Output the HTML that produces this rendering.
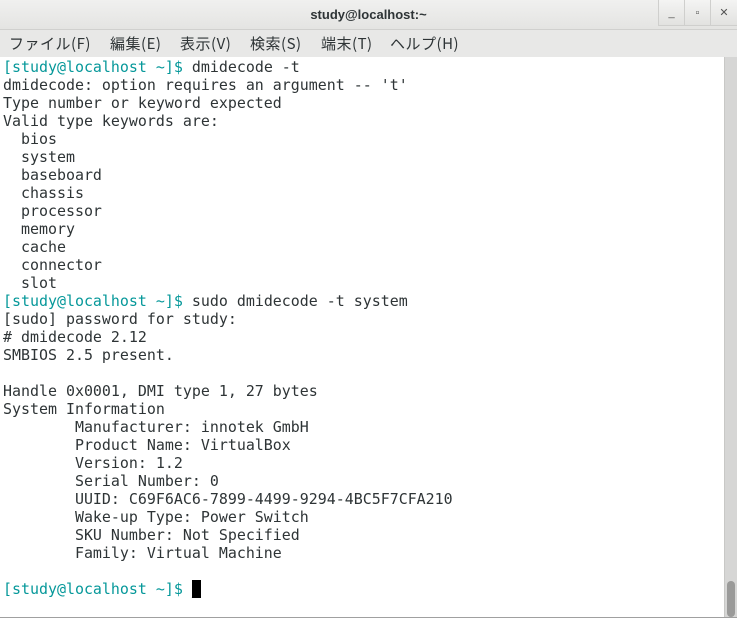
<!DOCTYPE html>
<html><head><meta charset="utf-8"><style>
body{margin:0;width:737px;height:618px;overflow:hidden;background:#e8e8e7;font-family:"Liberation Sans","Noto Sans CJK JP",sans-serif;position:relative}
#title{position:absolute;left:0;top:0;width:737px;height:30px;background:linear-gradient(#f0f0ef,#e4e4e2);border-bottom:1px solid #d0d0ce;box-sizing:border-box}
#title .t{position:absolute;left:0;right:0;top:7px;text-align:center;font-weight:bold;font-size:13px;color:#2e3436}
.btn{position:absolute;top:0;width:26px;height:26px;border-left:1px solid #cfcfcd;border-bottom:1px solid #cfcfcd;background:linear-gradient(#f4f4f3,#e2e2e0);font-size:11px;color:#555;text-align:center;line-height:26px;box-sizing:border-box}
#menu{position:absolute;top:30px;left:0;width:737px;height:27px;font-size:15px;color:#2e3436;font-family:"Noto Sans CJK JP",sans-serif}
#menu span{position:absolute;top:3px;letter-spacing:0.5px}
#term{position:absolute;top:57px;left:0;width:724px;height:560px;background:#fff}
pre{margin:0;position:absolute;left:3px;top:1px;font-family:"DejaVu Sans Mono",monospace;font-size:14.95px;line-height:18px;color:#2e3436}
.p{color:#06989a}
#sb{position:absolute;top:57px;left:724px;width:13px;height:560px;background:#d6d6d5;border-left:1px solid #c8c8c6;box-sizing:border-box}
#th{position:absolute;left:2px;bottom:0px;width:8px;height:36px;border-radius:4px;background:#9a9a99}
#bot{position:absolute;top:617px;left:0;width:737px;height:1px;background:#a0a0a0}
.cur{background:#000;color:#000}
</style></head><body>
<div id="title"><div class="t">study@localhost:~</div>
<div class="btn" style="left:658px">_</div><div class="btn" style="left:684px">▫</div><div class="btn" style="left:710px;width:27px">✕</div></div>
<div id="menu"><span style="left:9px">ファイル(F)</span><span style="left:110px">編集(E)</span><span style="left:180px">表示(V)</span><span style="left:250px">検索(S)</span><span style="left:321px">端末(T)</span><span style="left:390px">ヘルプ(H)</span></div>
<div id="term"><pre><span class="p">[study@localhost ~]$</span> dmidecode -t
dmidecode: option requires an argument -- 't'
Type number or keyword expected
Valid type keywords are:
  bios
  system
  baseboard
  chassis
  processor
  memory
  cache
  connector
  slot
<span class="p">[study@localhost ~]$</span> sudo dmidecode -t system
[sudo] password for study:
# dmidecode 2.12
SMBIOS 2.5 present.

Handle 0x0001, DMI type 1, 27 bytes
System Information
        Manufacturer: innotek GmbH
        Product Name: VirtualBox
        Version: 1.2
        Serial Number: 0
        UUID: C69F6AC6-7899-4499-9294-4BC5F7CFA210
        Wake-up Type: Power Switch
        SKU Number: Not Specified
        Family: Virtual Machine

<span class="p">[study@localhost ~]$</span> <span class="cur">_</span></pre></div>
<div id="sb"><div id="th"></div></div>
<div id="bot"></div>
</body></html>
